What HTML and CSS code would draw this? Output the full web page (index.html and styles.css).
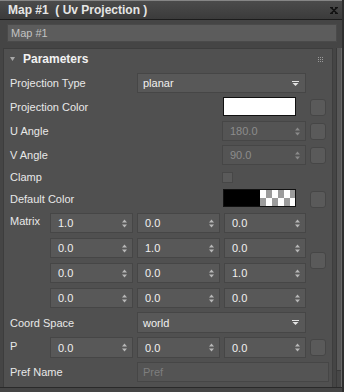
FILE: index.html
```html
<!DOCTYPE html>
<html>
<head>
<meta charset="utf-8">
<link rel="stylesheet" href="styles.css">
</head>
<body>
<div class="window">
  <div class="titlebar">
    <span class="title">Map #1  ( Uv Projection )</span>
    <svg class="close" width="8" height="7" viewBox="0 0 8 7"><path d="M0 0.5H3M5 0.5H8M0 6.5H3M5 6.5H8M1 0.5L7 6.5M7 0.5L1 6.5" stroke="#111" stroke-width="1.4" fill="none"/></svg>
  </div>
  <div class="name-row"><div class="name-field">Map #1</div></div>
  <div class="body">
    <div class="panel">
      <div class="panel-head">
        <svg class="tri" width="5" height="4" viewBox="0 0 5 4"><path d="M0 0H5L2.5 4Z" fill="#a8a8a8"/></svg>
        <span class="panel-title">Parameters</span>
        <svg class="grip" width="5" height="5" viewBox="0 0 5 5" fill="#9a9a9a"><rect x="0" y="0" width="1" height="1"/><rect x="2" y="0" width="1" height="1"/><rect x="4" y="0" width="1" height="1"/><rect x="0" y="2" width="1" height="1"/><rect x="2" y="2" width="1" height="1"/><rect x="4" y="2" width="1" height="1"/><rect x="0" y="4" width="1" height="1"/><rect x="2" y="4" width="1" height="1"/><rect x="4" y="4" width="1" height="1"/></svg>
      </div>
      <div class="params">
        <div class="label wide">Projection Type</div>
        <div class="dropdown span2"><span>planar</span><svg class="dd" width="7" height="5" viewBox="0 0 7 5"><rect x="0" y="0" width="7" height="1" fill="#e2e2e2"/><path d="M0.5 2H6.5L3.5 5Z" fill="#e2e2e2"/></svg></div>

        <div class="label wide">Projection Color</div>
        <div class="swatch white c4"></div>
        <div class="btn c5"></div>

        <div class="label wide">U Angle</div>
        <div class="spin disabled c4"><span>180.0</span><svg class="arr" width="5" height="9" viewBox="0 0 5 9"><path d="M0 3.5L2.5 0.5L5 3.5ZM0 5.5H5L2.5 8.5Z"/></svg></div>
        <div class="btn c5"></div>

        <div class="label wide">V Angle</div>
        <div class="spin disabled c4"><span>90.0</span><svg class="arr" width="5" height="9" viewBox="0 0 5 9"><path d="M0 3.5L2.5 0.5L5 3.5ZM0 5.5H5L2.5 8.5Z"/></svg></div>
        <div class="btn c5"></div>

        <div class="label wide">Clamp</div>
        <div class="check c4"></div>

        <div class="label wide">Default Color</div>
        <div class="swatch split c4"><div class="black"></div><div class="checker"></div></div>
        <div class="btn c5"></div>

        <div class="label matrix-label">Matrix</div>
        <div class="matrix">
          <div class="spin"><span>1.0</span><svg class="arr" width="5" height="9" viewBox="0 0 5 9"><path d="M0 3.5L2.5 0.5L5 3.5ZM0 5.5H5L2.5 8.5Z"/></svg></div>
          <div class="spin"><span>0.0</span><svg class="arr" width="5" height="9" viewBox="0 0 5 9"><path d="M0 3.5L2.5 0.5L5 3.5ZM0 5.5H5L2.5 8.5Z"/></svg></div>
          <div class="spin"><span>0.0</span><svg class="arr" width="5" height="9" viewBox="0 0 5 9"><path d="M0 3.5L2.5 0.5L5 3.5ZM0 5.5H5L2.5 8.5Z"/></svg></div>
          <div class="spin"><span>0.0</span><svg class="arr" width="5" height="9" viewBox="0 0 5 9"><path d="M0 3.5L2.5 0.5L5 3.5ZM0 5.5H5L2.5 8.5Z"/></svg></div>
          <div class="spin"><span>1.0</span><svg class="arr" width="5" height="9" viewBox="0 0 5 9"><path d="M0 3.5L2.5 0.5L5 3.5ZM0 5.5H5L2.5 8.5Z"/></svg></div>
          <div class="spin"><span>0.0</span><svg class="arr" width="5" height="9" viewBox="0 0 5 9"><path d="M0 3.5L2.5 0.5L5 3.5ZM0 5.5H5L2.5 8.5Z"/></svg></div>
          <div class="spin"><span>0.0</span><svg class="arr" width="5" height="9" viewBox="0 0 5 9"><path d="M0 3.5L2.5 0.5L5 3.5ZM0 5.5H5L2.5 8.5Z"/></svg></div>
          <div class="spin"><span>0.0</span><svg class="arr" width="5" height="9" viewBox="0 0 5 9"><path d="M0 3.5L2.5 0.5L5 3.5ZM0 5.5H5L2.5 8.5Z"/></svg></div>
          <div class="spin"><span>1.0</span><svg class="arr" width="5" height="9" viewBox="0 0 5 9"><path d="M0 3.5L2.5 0.5L5 3.5ZM0 5.5H5L2.5 8.5Z"/></svg></div>
          <div class="spin"><span>0.0</span><svg class="arr" width="5" height="9" viewBox="0 0 5 9"><path d="M0 3.5L2.5 0.5L5 3.5ZM0 5.5H5L2.5 8.5Z"/></svg></div>
          <div class="spin"><span>0.0</span><svg class="arr" width="5" height="9" viewBox="0 0 5 9"><path d="M0 3.5L2.5 0.5L5 3.5ZM0 5.5H5L2.5 8.5Z"/></svg></div>
          <div class="spin"><span>0.0</span><svg class="arr" width="5" height="9" viewBox="0 0 5 9"><path d="M0 3.5L2.5 0.5L5 3.5ZM0 5.5H5L2.5 8.5Z"/></svg></div>
        </div>
        <div class="btn matrix-btn"></div>

        <div class="label wide">Coord Space</div>
        <div class="dropdown span2"><span>world</span><svg class="dd" width="7" height="5" viewBox="0 0 7 5"><rect x="0" y="0" width="7" height="1" fill="#e2e2e2"/><path d="M0.5 2H6.5L3.5 5Z" fill="#e2e2e2"/></svg></div>

        <div class="label p-label">P</div>
        <div class="spin c2"><span>0.0</span><svg class="arr" width="5" height="9" viewBox="0 0 5 9"><path d="M0 3.5L2.5 0.5L5 3.5ZM0 5.5H5L2.5 8.5Z"/></svg></div>
        <div class="spin c3"><span>0.0</span><svg class="arr" width="5" height="9" viewBox="0 0 5 9"><path d="M0 3.5L2.5 0.5L5 3.5ZM0 5.5H5L2.5 8.5Z"/></svg></div>
        <div class="spin c4"><span>0.0</span><svg class="arr" width="5" height="9" viewBox="0 0 5 9"><path d="M0 3.5L2.5 0.5L5 3.5ZM0 5.5H5L2.5 8.5Z"/></svg></div>
        <div class="btn c5"></div>

        <div class="label wide">Pref Name</div>
        <div class="textfield disabled pref"><span>Pref</span></div>
      </div>
    </div>
    <div class="scrollbar"><div class="thumb"></div></div>
  </div>
</div>
</body>
</html>
```

FILE: styles.css
```css
* { box-sizing: border-box; }
html, body { margin: 0; padding: 0; background: #444; }
body { font-family: "Liberation Sans", Arial, sans-serif; font-size: 11px; color: #e4e4e4; }

.window {
  width: 344px;
  height: 392px;
  background: #454545;
  border-right: 2px solid #2e2e2e;
  display: flex;
  flex-direction: column;
  overflow: hidden;
}

.titlebar {
  height: 20px;
  flex: none;
  display: flex;
  align-items: center;
  justify-content: space-between;
  padding: 0 4px 0 8px;
  background: linear-gradient(#4b4b4b, #3b3b3b);
  border-top: 1px solid #858585;
  border-bottom: 1px solid #1c1c1c;
}
.title { font-weight: bold; font-size: 12px; color: #e6e6e6; white-space: pre; line-height: 18px; }
.close { display: block; margin-top: 1px; }

.name-row { padding: 4px 5px 6px 7px; flex: none; }
.name-field {
  height: 18px;
  background: #5c5c5c;
  border: 1px solid #4a4a4a;
  color: #c2c2c2;
  padding-left: 3px;
  line-height: 16px;
}

.body {
  flex: 1;
  display: flex;
  padding-left: 3px;
  gap: 3px;
  border-bottom: 1px solid #2a2a2a;
  margin-bottom: 4px;
}

.panel {
  width: 330px;
  background: #505050;
  border: 1px solid #3d3d3d;
  border-bottom: none;
}
.panel-head {
  height: 20px;
  display: flex;
  align-items: center;
  padding-left: 6px;
  padding-right: 9px;
}
.tri { display: block; margin-right: 8px; }
.panel-title { font-weight: bold; font-size: 12px; color: #f2f2f2; flex: 1; }
.grip { display: block; margin-top: 1px; }

.params {
  display: grid;
  grid-template-columns: 36px 83px 83px 82px 16px;
  grid-template-rows: 20px 20px 20px 20px 16px 20px 95px 21px 21px 20px;
  column-gap: 4px;
  row-gap: 4px;
  padding: 4px 0 0 6px;
}

.label { align-self: center; white-space: nowrap; color: #e8e8e8; grid-column: 1 / span 2; }
.matrix-label { grid-column: 1; align-self: start; margin-top: 2px; }
.p-label { grid-column: 1; margin-top: -3px; }

.c2 { grid-column: 2; }
.c3 { grid-column: 3; }
.c4 { grid-column: 4; }
.c5 { grid-column: 5; }
.span2 { grid-column: 3 / span 2; }

.dropdown, .spin, .textfield {
  display: flex;
  align-items: center;
  background: #585858;
  border: 1px solid #464646;
  padding: 0 5px 0 5px;
  color: #f0f0f0;
}
.dropdown span, .spin span, .textfield span { flex: 1; }
.dd { display: block; margin-right: 1px; }
.arr { display: block; fill: #b8b8b8; }
.spin.disabled { background: #545454; color: #8c8c8c; margin-left: -2px; }
.spin.disabled .arr { fill: #8a8a8a; }
.spin span { padding-left: 2px; }

.swatch { height: 19px; width: 73px; border: 1px solid #111; margin-left: -1px; }
.swatch.white { background: #fff; }
.swatch.split { display: flex; height: 18px; margin-top: 0; }
.black { width: 36px; background: #000; }
.checker {
  flex: 1;
  background: repeating-conic-gradient(#9c9c9c 0 25%, #ffffff 0 50%) 0 0 / 12px 16px;
}

.btn {
  width: 16px;
  height: 17px;
  align-self: center;
  background: #5a5a5a;
  border: 1px solid #464646;
  border-radius: 3px;
}

.check {
  width: 11px;
  height: 11px;
  align-self: center;
  background: #5a5a5a;
  border: 1px solid #474747;
  margin-left: -2px;
}

.matrix {
  grid-column: 2 / span 3;
  display: grid;
  grid-template-columns: 83px 83px 82px;
  grid-template-rows: repeat(4, 20px);
  column-gap: 4px;
  row-gap: 5px;
}
.matrix-btn { grid-column: 5; }

.pref { grid-column: 3 / span 3; margin-right: -3px; background: #545454; color: #7e7e7e; }

.scrollbar {
  width: 6px;
  background: #474747;
  border-left: 1px solid #3a3a3a;
  border-right: 1px solid #6a6a6a;
  display: flex;
  flex-direction: column;
}
.thumb { height: 323px; background: #575757; border-bottom: 1px solid #3a3a3a; }
```
